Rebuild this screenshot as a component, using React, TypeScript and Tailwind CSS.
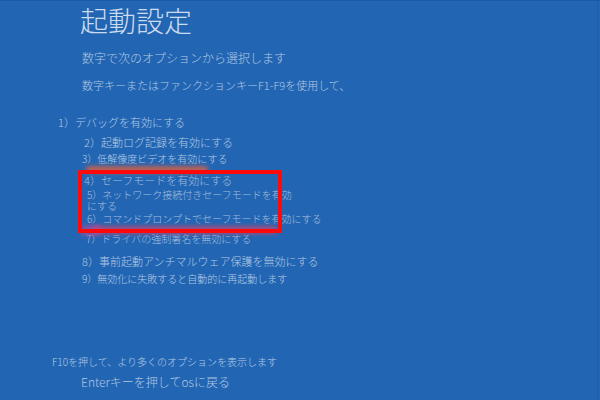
import React from "react";

type Row = { label: string; size: string; x: string; mt: string; dim?: boolean };

const rows: Row[] = [
  { label: "1）デバッグを有効にする", size: "text-[11px]", x: "ml-[58px]", mt: "mt-[27px]" },
  { label: "2）起動ログ記録を有効にする", size: "text-[11px]", x: "ml-[84px]", mt: "mt-[10px]" },
  { label: "3）低解像度ビデオを有効にする", size: "text-[10px]", x: "ml-[82px]", mt: "mt-[7px]" },
  { label: "4）セーフモードを有効にする", size: "text-[11px]", x: "ml-[84px]", mt: "mt-[11px]", dim: true },
];

const App: React.FC = () => {
  return (
    <div
      className="relative w-[600px] h-[400px] overflow-hidden bg-[#2266b3] border-t border-[#1b5ba6] text-[#b3c8e3] font-light"
      style={{ fontFamily: '"Noto Sans CJK JP", "Noto Sans", sans-serif' }}
    >
      <div className="flex flex-col pt-[14px]">
        <div className="ml-[80px] h-[10px] leading-[10px] text-[28px] text-[#cddbee]">起動設定</div>
        <div className="ml-[82px] mt-[28px] h-[10px] leading-[10px] text-[12px]">
          数字で次のオプションから選択します
        </div>
        <div className="ml-[82px] mt-[17px] h-[10px] leading-[10px] text-[11px]">
          数字キーまたはファンクションキーF1-F9を使用して、
        </div>

        {rows.map((r) => (
          <div
            key={r.label}
            className={`${r.x} ${r.mt} ${r.size} h-[10px] leading-[10px] whitespace-nowrap ${
              r.dim ? "text-[#a5bddc]" : ""
            }`}
          >
            {r.label}
          </div>
        ))}

        <div className="ml-[87px] mt-[4px] text-[10px] leading-[11px] text-[#a5bddc]">
          5）ネットワーク接続付きセーフモードを有効
          <br />
          にする
        </div>
        <div className="ml-[87px] mt-[3px] h-[10px] leading-[10px] text-[10px] whitespace-nowrap text-[#a5bddc]">
          6）コマンドプロンプトでセーフモードを有効にする
        </div>
        <div className="ml-[86px] mt-[10px] h-[10px] leading-[10px] text-[10px] whitespace-nowrap text-[#a5bddc]">
          7）ドライバの強制署名を無効にする
        </div>
        <div className="ml-[82px] mt-[12px] h-[10px] leading-[10px] text-[11px] whitespace-nowrap">
          8）事前起動アンチマルウェア保護を無効にする
        </div>
        <div className="ml-[82px] mt-[8px] h-[10px] leading-[10px] text-[10px] whitespace-nowrap">
          9）無効化に失敗すると自動的に再起動します
        </div>

        <div className="ml-[52px] mt-[73px] h-[10px] leading-[10px] text-[10px] whitespace-nowrap">
          F10を押して、より多くのオプションを表示します
        </div>
        <div className="ml-[81px] mt-[10px] h-[10px] leading-[10px] text-[12px] whitespace-nowrap">
          Enterキーを押してosに戻る
        </div>
      </div>

      {/* marker smudges */}
      <div className="absolute left-[86px] top-[165px] w-[122px] h-[7px] rounded-full bg-[#e8603a] opacity-80 blur-[2px]" />
      <div className="absolute left-[92px] top-[225px] w-[185px] h-[8px] rounded-full bg-[#e0406a] opacity-70 blur-[2px]" />
      <div className="absolute left-[80px] top-[224px] w-[22px] h-[11px] rounded-full bg-[#c04a9a] opacity-60 blur-[2px]" />

      {/* highlight box */}
      <div className="absolute left-[78px] top-[169px] w-[204px] h-[63px] border-[4px] border-[#ff0a0a]" />

      <div className="absolute right-[2px] top-0 w-px h-full bg-[#1d5ca6]" />
    </div>
  );
};

export default App;
